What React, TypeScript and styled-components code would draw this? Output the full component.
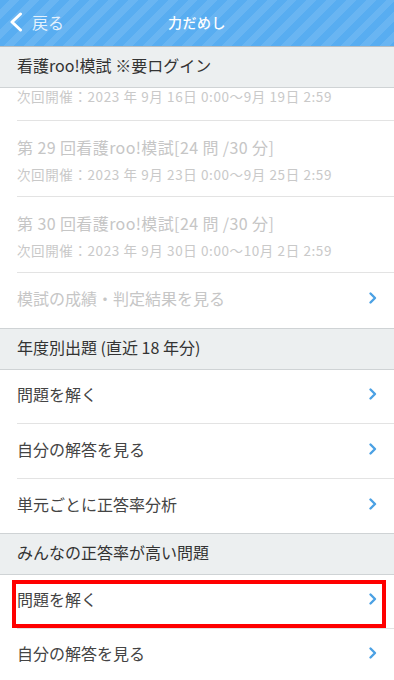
import React from "react";
import styled, { createGlobalStyle } from "styled-components";

const Global = createGlobalStyle`
  html, body { margin: 0; padding: 0; background: #ffffff; }
  body { font-family: "Noto Sans CJK JP", "Noto Sans", sans-serif; -webkit-font-smoothing: antialiased; }
  * { box-sizing: border-box; }
`;

const Screen = styled.div`
  width: 394px;
  height: 680px;
  overflow: hidden;
  display: flex;
  flex-direction: column;
  background: #fff;
`;

const NavBar = styled.header`
  height: 47px;
  flex: none;
  display: grid;
  grid-template-columns: 1fr auto 1fr;
  align-items: center;
  background-color: #58adf1;
  background-image: repeating-linear-gradient(
    135deg,
    rgba(255, 255, 255, 0) 0px,
    rgba(255, 255, 255, 0) 7px,
    rgba(255, 255, 255, 0.1) 7px,
    rgba(255, 255, 255, 0.1) 14px
  );
  border-bottom: 1px solid #b9bec2;
`;

const BackButton = styled.div`
  display: flex;
  align-items: center;
  gap: 9px;
  padding-left: 9px;
  padding-bottom: 2px;
  color: #e3f1fd;
  font-size: 16px;
`;

const NavTitle = styled.div`
  color: #ffffff;
  font-size: 14px;
  font-weight: 500;
  letter-spacing: 0.5px;
  padding-bottom: 2px;
`;

const SectionHeader = styled.div<{ $top?: boolean }>`
  flex: none;
  height: ${(p) => (p.$top ? "41px" : "42px")};
  display: flex;
  align-items: center;
  padding: 0 17px 4px;
  background: #eceff0;
  color: #333;
  font-size: 16px;
  border-bottom: 1px solid #cfd3d5;
  border-top: ${(p) => (p.$top ? "none" : "1px solid #cfd3d5")};
`;

const Row = styled.div<{ $height?: number; $last?: boolean; $disabled?: boolean }>`
  position: relative;
  flex: none;
  height: ${(p) => p.$height ?? 54}px;
  margin-left: 17px;
  padding-right: 17px;
  padding-bottom: 5px;
  display: flex;
  align-items: center;
  justify-content: space-between;
  border-bottom: ${(p) => (p.$last ? "none" : "1px solid #e3e3e3")};
  color: ${(p) => (p.$disabled ? "#c6c6c6" : "#444")};
  font-size: 16px;
`;

const ClippedRow = styled.div`
  flex: none;
  height: 33px;
  margin-left: 17px;
  display: flex;
  flex-direction: column;
  justify-content: flex-end;
  padding-bottom: 15px;
  border-bottom: 1px solid #e3e3e3;
`;

const TwoLine = styled.div`
  display: flex;
  flex-direction: column;
  gap: 7px;
  margin-top: 6px;
`;

const Title = styled.div`
  color: #c6c6c6;
  font-size: 16px;
  line-height: 22px;
  letter-spacing: 0.4px;
`;

const Sub = styled.div`
  color: #c9c9c9;
  font-size: 13.5px;
  line-height: 18px;
  letter-spacing: 0.6px;
`;

const Highlight = styled.div`
  position: absolute;
  left: -5px;
  right: 8px;
  top: 5px;
  bottom: 0px;
  border: 4px solid #ff0000;
  pointer-events: none;
`;

const Chevron = () => (
  <svg width="9" height="14" viewBox="0 0 9 14" style={{ flex: "none" }}>
    <path d="M2.5 2.5 L7 7 L2.5 11.5" fill="none" stroke="#4ba1e4" strokeWidth="2.4" strokeLinecap="round" strokeLinejoin="round" />
  </svg>
);

const BackChevron = () => (
  <svg width="14" height="20" viewBox="0 0 14 20">
    <path d="M11.5 2 L3 10 L11.5 18" fill="none" stroke="#ffffff" strokeWidth="3" strokeLinecap="round" strokeLinejoin="round" />
  </svg>
);

const exams = [
  { title: "第 29 回看護roo!模試[24 問 /30 分]", sub: "次回開催：2023 年 9月 23日 0:00～9月 25日 2:59" },
  { title: "第 30 回看護roo!模試[24 問 /30 分]", sub: "次回開催：2023 年 9月 30日 0:00～10月 2日 2:59" },
];

export default function App() {
  return (
    <>
      <Global />
      <Screen>
        <NavBar>
          <BackButton>
            <BackChevron />
            <span>戻る</span>
          </BackButton>
          <NavTitle>力だめし</NavTitle>
          <div />
        </NavBar>

        <SectionHeader $top>看護roo!模試 ※要ログイン</SectionHeader>
        <ClippedRow>
          <Sub>次回開催：2023 年 9月 16日 0:00～9月 19日 2:59</Sub>
        </ClippedRow>
        {exams.map((e) => (
          <Row key={e.title} $height={76}>
            <TwoLine>
              <Title>{e.title}</Title>
              <Sub>{e.sub}</Sub>
            </TwoLine>
          </Row>
        ))}
        <Row $height={55} $last $disabled>
          <span>模試の成績・判定結果を見る</span>
          <Chevron />
        </Row>

        <SectionHeader>年度別出題 (直近 18 年分)</SectionHeader>
        <Row>
          <span>問題を解く</span>
          <Chevron />
        </Row>
        <Row $height={55}>
          <span>自分の解答を見る</span>
          <Chevron />
        </Row>
        <Row $last>
          <span>単元ごとに正答率分析</span>
          <Chevron />
        </Row>

        <SectionHeader>みんなの正答率が高い問題</SectionHeader>
        <Row>
          <span>問題を解く</span>
          <Chevron />
          <Highlight />
        </Row>
        <Row>
          <span>自分の解答を見る</span>
          <Chevron />
        </Row>
      </Screen>
    </>
  );
}
